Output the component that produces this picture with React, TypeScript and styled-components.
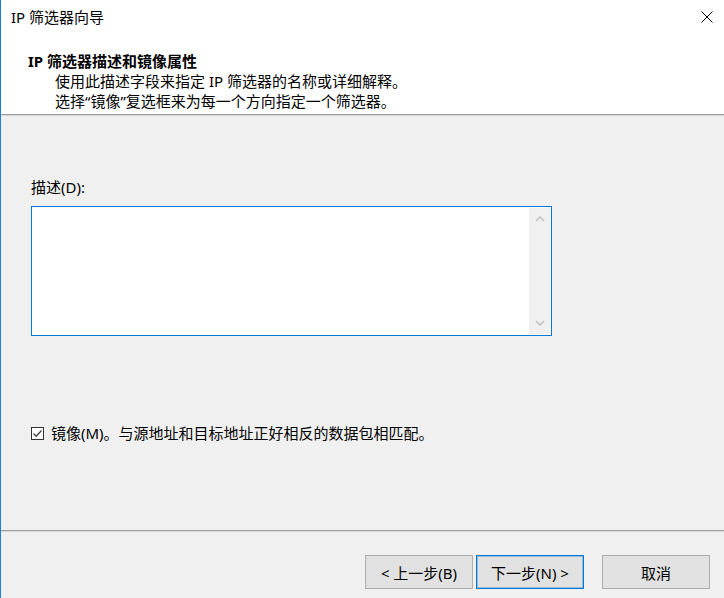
import React from "react";
import styled, { createGlobalStyle } from "styled-components";

const FONT = `"Noto Sans", "Noto Sans CJK SC", sans-serif`;

const Global = createGlobalStyle`
  html, body { margin: 0; padding: 0; background: #f0f0f0; }
  body { font-family: ${FONT}; font-size: 15px; color: #000; }
  * { box-sizing: border-box; }
`;

const Window = styled.div`
  width: 724px;
  height: 598px;
  border-left: 1px solid #1883d7;
  background: #f0f0f0;
  display: flex;
  flex-direction: column;
  overflow: hidden;
`;

const Header = styled.div`
  height: 115px;
  background: #fff;
  border-bottom: 1px solid #a0a0a0;
  box-shadow: 0 1px 0 #d6d6d6;
  display: flex;
  flex-direction: column;
  flex-shrink: 0;
`;

const TitleBar = styled.div`
  height: 34px;
  display: flex;
  align-items: center;
  justify-content: space-between;
  padding: 0 11px 0 10px;
`;

const TitleText = styled.span`
  line-height: 20px;
`;

const CloseBtn = styled.div`
  width: 12px;
  height: 12px;
  display: flex;
`;

const HeadBlock = styled.div`
  padding: 17px 0 0 27px;
  line-height: 20px;
`;

const HeadTitle = styled.div`
  font-weight: bold;
`;

const HeadSub = styled.div`
  padding-left: 27px;
`;

const Body = styled.div`
  flex: 1;
  display: flex;
  flex-direction: column;
  padding: 62px 0 0 30px;
`;

const Label = styled.div`
  line-height: 20px;
  margin-bottom: 9px;
`;

const TextBox = styled.div`
  width: 521px;
  height: 130px;
  border: 1px solid #0078d7;
  background: #fff;
  padding: 1px;
  display: flex;
`;

const TextArea = styled.div`
  flex: 1;
`;

const ScrollBar = styled.div`
  width: 21px;
  background: #f0f0f0;
  display: flex;
  flex-direction: column;
  justify-content: space-between;
`;

const ArrowCell = styled.div`
  height: 22px;
  display: flex;
  align-items: center;
  justify-content: center;
`;

const CheckRow = styled.label`
  margin-top: 87px;
  display: flex;
  align-items: center;
  gap: 7px;
  line-height: 20px;
`;

const CheckBox = styled.span`
  width: 13px;
  height: 13px;
  border: 1px solid #333;
  background: #fff;
  display: flex;
  align-items: center;
  justify-content: center;
`;

const Footer = styled.div`
  height: 68px;
  flex-shrink: 0;
  border-top: 1px solid #a0a0a0;
  box-shadow: inset 0 1px 0 #d6d6d6;
  display: flex;
  justify-content: flex-end;
  align-items: flex-start;
  padding: 24px 14px 0 0;
`;

const ButtonGroup = styled.div`
  display: flex;
  gap: 3px;
  margin-right: 18px;
`;

const Button = styled.button<{ $default?: boolean }>`
  width: 108px;
  height: 34px;
  background: #e1e1e1;
  border: 1px solid ${(p) => (p.$default ? "#0078d7" : "#adadad")};
  box-shadow: ${(p) => (p.$default ? "inset 0 0 0 1px rgba(0,120,215,0.35)" : "none")};
  font-family: ${FONT};
  font-size: 15px;
  color: #000;
  padding: 0;
  display: flex;
  align-items: center;
  justify-content: center;
  white-space: pre;
`;

const Chevron = ({ up }: { up?: boolean }) => (
  <svg width="10" height="6" viewBox="0 0 10 6">
    <polyline
      points={up ? "1,5 5,1 9,5" : "1,1 5,5 9,1"}
      fill="none"
      stroke="#c2c2c2"
      strokeWidth="1.6"
    />
  </svg>
);

export default function App() {
  return (
    <>
      <Global />
      <Window>
        <Header>
          <TitleBar>
            <TitleText>IP 筛选器向导</TitleText>
            <CloseBtn>
              <svg width="12" height="12" viewBox="0 0 12 12">
                <path d="M0.5 0.5 L11.5 11.5 M11.5 0.5 L0.5 11.5" stroke="#000" strokeWidth="1" fill="none" />
              </svg>
            </CloseBtn>
          </TitleBar>
          <HeadBlock>
            <HeadTitle>IP 筛选器描述和镜像属性</HeadTitle>
            <HeadSub>使用此描述字段来指定 IP 筛选器的名称或详细解释。</HeadSub>
            <HeadSub>选择“镜像”复选框来为每一个方向指定一个筛选器。</HeadSub>
          </HeadBlock>
        </Header>
        <Body>
          <Label>描述(D):</Label>
          <TextBox>
            <TextArea />
            <ScrollBar>
              <ArrowCell>
                <Chevron up />
              </ArrowCell>
              <ArrowCell>
                <Chevron />
              </ArrowCell>
            </ScrollBar>
          </TextBox>
          <CheckRow>
            <CheckBox>
              <svg width="11" height="11" viewBox="0 0 11 11">
                <polyline points="1.5,5.5 4.2,8.3 9.5,2.5" fill="none" stroke="#444" strokeWidth="1.3" />
              </svg>
            </CheckBox>
            <span>镜像(M)。与源地址和目标地址正好相反的数据包相匹配。</span>
          </CheckRow>
        </Body>
        <Footer>
          <ButtonGroup>
            <Button>{"< 上一步(B)"}</Button>
            <Button $default>{"下一步(N) >"}</Button>
          </ButtonGroup>
          <Button>取消</Button>
        </Footer>
      </Window>
    </>
  );
}
